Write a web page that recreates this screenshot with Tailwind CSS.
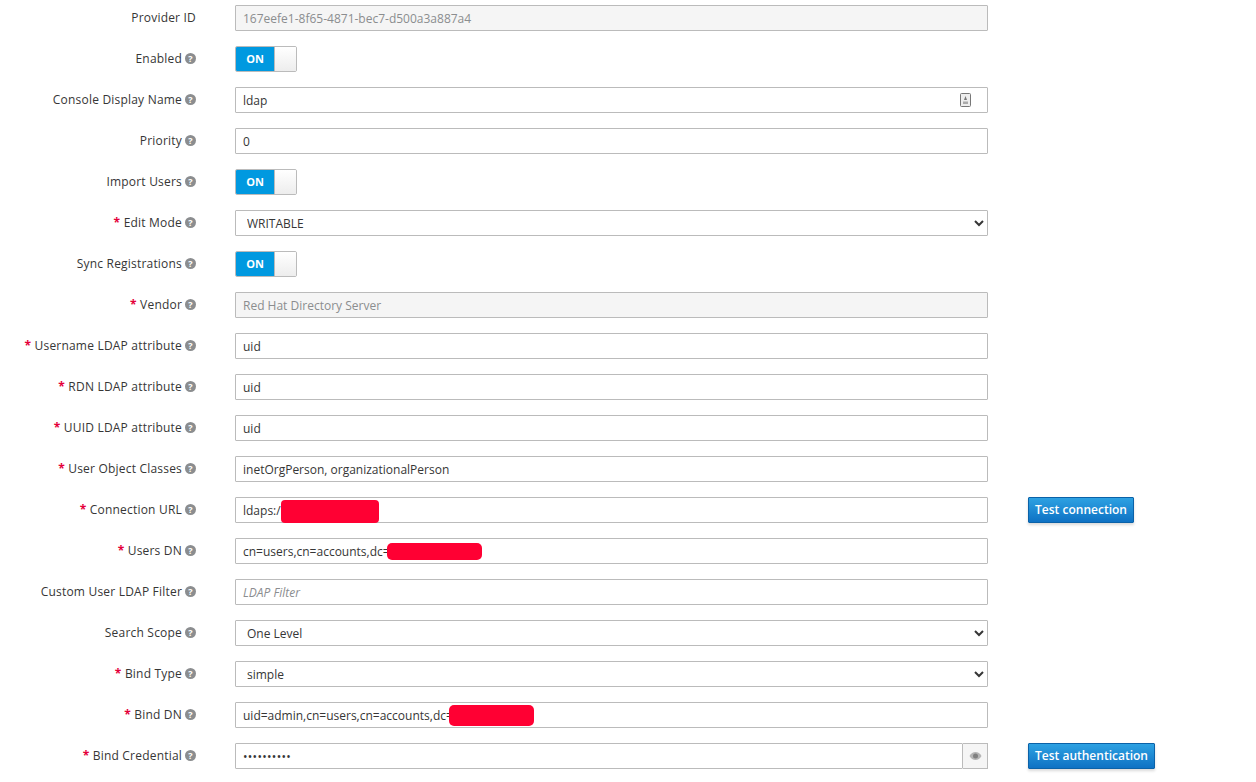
<!DOCTYPE html>
<html lang="en">
<head>
    <meta charset="UTF-8">
    <title>LDAP Provider</title>
    <script src="https://cdn.jsdelivr.net/npm/@tailwindcss/browser@4"></script>
</head>
<body class="bg-white overflow-hidden h-[782px] font-['Open_Sans',sans-serif] text-[12px] text-[#363636]">
<form class="pt-[5px] pl-[235px]">

    <!-- Provider ID -->
    <div class="relative flex items-center h-[26px] mb-[15px]">
        <label class="absolute right-full mr-[39px] whitespace-nowrap font-medium tracking-[0.2px]">Provider ID</label>
        <input disabled value="167eefe1-8f65-4871-bec7-d500a3a887a4" class="w-[753px] h-[26px] px-[7px] border border-[#bbb] bg-[#f5f5f5] text-[#8b8d8f] rounded-[1px]">
    </div>

    <!-- Enabled -->
    <div class="relative flex items-center h-[26px] mb-[15px]">
        <label class="absolute right-full mr-[39px] flex items-center gap-[3px] whitespace-nowrap font-medium tracking-[0.2px]">Enabled <span class="-mt-px w-[11px] h-[11px] rounded-full bg-[#8b8d8f] text-white text-[9px] font-bold leading-[11px] text-center tracking-normal">?</span></label>
        <div class="flex w-[62px] h-[26px] border border-[#bbb] rounded-[2px] overflow-hidden">
            <span class="w-[38px] bg-[#0099e0] text-white text-[11px] font-bold text-center leading-[24px]">ON</span>
            <span class="flex-1 border-l border-[#bbb] bg-gradient-to-b from-white to-[#ededed]"></span>
        </div>
    </div>

    <!-- Console Display Name -->
    <div class="relative flex items-center h-[26px] mb-[15px]">
        <label class="absolute right-full mr-[39px] flex items-center gap-[3px] whitespace-nowrap font-medium tracking-[0.2px]">Console Display Name <span class="-mt-px w-[11px] h-[11px] rounded-full bg-[#8b8d8f] text-white text-[9px] font-bold leading-[11px] text-center tracking-normal">?</span></label>
        <input value="ldap" class="w-[753px] h-[26px] px-[7px] border border-[#bbb] bg-white rounded-[1px]">
        <svg class="absolute left-[725px] top-[6px]" width="11" height="14" viewBox="0 0 11 14"><rect x="0.5" y="0.5" width="10" height="13" rx="1" fill="#eee" stroke="#777"/><path d="M5.500 3 L7 7 H4z" fill="#777"/><rect x="3" y="8.500" width="5" height="2.500" fill="#aaa"/></svg>
    </div>

    <!-- Priority -->
    <div class="relative flex items-center h-[26px] mb-[15px]">
        <label class="absolute right-full mr-[39px] flex items-center gap-[3px] whitespace-nowrap font-medium tracking-[0.2px]">Priority <span class="-mt-px w-[11px] h-[11px] rounded-full bg-[#8b8d8f] text-white text-[9px] font-bold leading-[11px] text-center tracking-normal">?</span></label>
        <input value="0" class="w-[753px] h-[26px] px-[7px] border border-[#bbb] bg-white rounded-[1px]">
    </div>

    <!-- Import Users -->
    <div class="relative flex items-center h-[26px] mb-[15px]">
        <label class="absolute right-full mr-[39px] flex items-center gap-[3px] whitespace-nowrap font-medium tracking-[0.2px]">Import Users <span class="-mt-px w-[11px] h-[11px] rounded-full bg-[#8b8d8f] text-white text-[9px] font-bold leading-[11px] text-center tracking-normal">?</span></label>
        <div class="flex w-[62px] h-[26px] border border-[#bbb] rounded-[2px] overflow-hidden">
            <span class="w-[38px] bg-[#0099e0] text-white text-[11px] font-bold text-center leading-[24px]">ON</span>
            <span class="flex-1 border-l border-[#bbb] bg-gradient-to-b from-white to-[#ededed]"></span>
        </div>
    </div>

    <!-- Edit Mode -->
    <div class="relative flex items-center h-[26px] mb-[15px]">
        <label class="absolute right-full mr-[39px] flex items-center gap-[3px] whitespace-nowrap font-medium tracking-[0.2px]"><span><span class="text-[#e4003a] font-bold">*</span> Edit Mode</span> <span class="-mt-px w-[11px] h-[11px] rounded-full bg-[#8b8d8f] text-white text-[9px] font-bold leading-[11px] text-center tracking-normal">?</span></label>
        <select class="w-[753px] h-[26px] px-[7px] border border-[#bbb] bg-white rounded-[1px] appearance-auto"><option>WRITABLE</option></select>
    </div>

    <!-- Sync Registrations -->
    <div class="relative flex items-center h-[26px] mb-[15px]">
        <label class="absolute right-full mr-[39px] flex items-center gap-[3px] whitespace-nowrap font-medium tracking-[0.2px]">Sync Registrations <span class="-mt-px w-[11px] h-[11px] rounded-full bg-[#8b8d8f] text-white text-[9px] font-bold leading-[11px] text-center tracking-normal">?</span></label>
        <div class="flex w-[62px] h-[26px] border border-[#bbb] rounded-[2px] overflow-hidden">
            <span class="w-[38px] bg-[#0099e0] text-white text-[11px] font-bold text-center leading-[24px]">ON</span>
            <span class="flex-1 border-l border-[#bbb] bg-gradient-to-b from-white to-[#ededed]"></span>
        </div>
    </div>

    <!-- Vendor -->
    <div class="relative flex items-center h-[26px] mb-[15px]">
        <label class="absolute right-full mr-[39px] flex items-center gap-[3px] whitespace-nowrap font-medium tracking-[0.2px]"><span><span class="text-[#e4003a] font-bold">*</span> Vendor</span> <span class="-mt-px w-[11px] h-[11px] rounded-full bg-[#8b8d8f] text-white text-[9px] font-bold leading-[11px] text-center tracking-normal">?</span></label>
        <input disabled value="Red Hat Directory Server" class="w-[753px] h-[26px] px-[7px] border border-[#bbb] bg-[#f5f5f5] text-[#8b8d8f] rounded-[1px]">
    </div>

    <!-- Username LDAP attribute -->
    <div class="relative flex items-center h-[26px] mb-[15px]">
        <label class="absolute right-full mr-[39px] flex items-center gap-[3px] whitespace-nowrap font-medium tracking-[0.2px]"><span><span class="text-[#e4003a] font-bold">*</span> Username LDAP attribute</span> <span class="-mt-px w-[11px] h-[11px] rounded-full bg-[#8b8d8f] text-white text-[9px] font-bold leading-[11px] text-center tracking-normal">?</span></label>
        <input value="uid" class="w-[753px] h-[26px] px-[7px] border border-[#bbb] bg-white rounded-[1px]">
    </div>

    <!-- RDN LDAP attribute -->
    <div class="relative flex items-center h-[26px] mb-[15px]">
        <label class="absolute right-full mr-[39px] flex items-center gap-[3px] whitespace-nowrap font-medium tracking-[0.2px]"><span><span class="text-[#e4003a] font-bold">*</span> RDN LDAP attribute</span> <span class="-mt-px w-[11px] h-[11px] rounded-full bg-[#8b8d8f] text-white text-[9px] font-bold leading-[11px] text-center tracking-normal">?</span></label>
        <input value="uid" class="w-[753px] h-[26px] px-[7px] border border-[#bbb] bg-white rounded-[1px]">
    </div>

    <!-- UUID LDAP attribute -->
    <div class="relative flex items-center h-[26px] mb-[15px]">
        <label class="absolute right-full mr-[39px] flex items-center gap-[3px] whitespace-nowrap font-medium tracking-[0.2px]"><span><span class="text-[#e4003a] font-bold">*</span> UUID LDAP attribute</span> <span class="-mt-px w-[11px] h-[11px] rounded-full bg-[#8b8d8f] text-white text-[9px] font-bold leading-[11px] text-center tracking-normal">?</span></label>
        <input value="uid" class="w-[753px] h-[26px] px-[7px] border border-[#bbb] bg-white rounded-[1px]">
    </div>

    <!-- User Object Classes -->
    <div class="relative flex items-center h-[26px] mb-[15px]">
        <label class="absolute right-full mr-[39px] flex items-center gap-[3px] whitespace-nowrap font-medium tracking-[0.2px]"><span><span class="text-[#e4003a] font-bold">*</span> User Object Classes</span> <span class="-mt-px w-[11px] h-[11px] rounded-full bg-[#8b8d8f] text-white text-[9px] font-bold leading-[11px] text-center tracking-normal">?</span></label>
        <input value="inetOrgPerson, organizationalPerson" class="w-[753px] h-[26px] px-[7px] border border-[#bbb] bg-white rounded-[1px]">
    </div>

    <!-- Connection URL -->
    <div class="relative flex items-center h-[26px] mb-[15px]">
        <label class="absolute right-full mr-[39px] flex items-center gap-[3px] whitespace-nowrap font-medium tracking-[0.2px]"><span><span class="text-[#e4003a] font-bold">*</span> Connection URL</span> <span class="-mt-px w-[11px] h-[11px] rounded-full bg-[#8b8d8f] text-white text-[9px] font-bold leading-[11px] text-center tracking-normal">?</span></label>
        <input value="ldaps:/" class="w-[753px] h-[26px] px-[7px] border border-[#bbb] bg-white rounded-[1px]">
        <span class="absolute left-[46px] top-[3px] w-[98px] h-[23px] rounded-[4px] bg-[#ff0033]"></span>
        <button type="button" class="ml-[40px] h-[26px] w-[106px] border border-[#0b62a8] rounded-[1px] bg-gradient-to-b from-[#2da1e2] to-[#0e72c4] text-white font-semibold shadow-[0_2px_3px_rgba(3,3,3,0.15)] whitespace-nowrap">Test connection</button>
    </div>

    <!-- Users DN -->
    <div class="relative flex items-center h-[26px] mb-[15px]">
        <label class="absolute right-full mr-[39px] flex items-center gap-[3px] whitespace-nowrap font-medium tracking-[0.2px]"><span><span class="text-[#e4003a] font-bold">*</span> Users DN</span> <span class="-mt-px w-[11px] h-[11px] rounded-full bg-[#8b8d8f] text-white text-[9px] font-bold leading-[11px] text-center tracking-normal">?</span></label>
        <input value="cn=users,cn=accounts,dc=" class="w-[753px] h-[26px] px-[7px] border border-[#bbb] bg-white rounded-[1px]">
        <span class="absolute left-[152px] top-[5px] w-[95px] h-[17px] rounded-[5px] bg-[#ff0033]"></span>
    </div>

    <!-- Custom User LDAP Filter -->
    <div class="relative flex items-center h-[26px] mb-[15px]">
        <label class="absolute right-full mr-[39px] flex items-center gap-[3px] whitespace-nowrap font-medium tracking-[0.2px]">Custom User LDAP Filter <span class="-mt-px w-[11px] h-[11px] rounded-full bg-[#8b8d8f] text-white text-[9px] font-bold leading-[11px] text-center tracking-normal">?</span></label>
        <input placeholder="LDAP Filter" class="w-[753px] h-[26px] px-[7px] border border-[#bbb] bg-white rounded-[1px] placeholder:italic placeholder:text-[#8b8d8f]">
    </div>

    <!-- Search Scope -->
    <div class="relative flex items-center h-[26px] mb-[15px]">
        <label class="absolute right-full mr-[39px] flex items-center gap-[3px] whitespace-nowrap font-medium tracking-[0.2px]">Search Scope <span class="-mt-px w-[11px] h-[11px] rounded-full bg-[#8b8d8f] text-white text-[9px] font-bold leading-[11px] text-center tracking-normal">?</span></label>
        <select class="w-[753px] h-[26px] px-[7px] border border-[#bbb] bg-white rounded-[1px] appearance-auto"><option>One Level</option></select>
    </div>

    <!-- Bind Type -->
    <div class="relative flex items-center h-[26px] mb-[15px]">
        <label class="absolute right-full mr-[39px] flex items-center gap-[3px] whitespace-nowrap font-medium tracking-[0.2px]"><span><span class="text-[#e4003a] font-bold">*</span> Bind Type</span> <span class="-mt-px w-[11px] h-[11px] rounded-full bg-[#8b8d8f] text-white text-[9px] font-bold leading-[11px] text-center tracking-normal">?</span></label>
        <select class="w-[753px] h-[26px] px-[7px] border border-[#bbb] bg-white rounded-[1px] appearance-auto"><option>simple</option></select>
    </div>

    <!-- Bind DN -->
    <div class="relative flex items-center h-[26px] mb-[15px]">
        <label class="absolute right-full mr-[39px] flex items-center gap-[3px] whitespace-nowrap font-medium tracking-[0.2px]"><span><span class="text-[#e4003a] font-bold">*</span> Bind DN</span> <span class="-mt-px w-[11px] h-[11px] rounded-full bg-[#8b8d8f] text-white text-[9px] font-bold leading-[11px] text-center tracking-normal">?</span></label>
        <input value="uid=admin,cn=users,cn=accounts,dc=" class="w-[753px] h-[26px] px-[7px] border border-[#bbb] bg-white rounded-[1px]">
        <span class="absolute left-[214px] top-[3px] w-[85px] h-[21px] rounded-[5px] bg-[#ff0033]"></span>
    </div>

    <!-- Bind Credential -->
    <div class="relative flex items-center h-[26px] mb-[15px]">
        <label class="absolute right-full mr-[39px] flex items-center gap-[3px] whitespace-nowrap font-medium tracking-[0.2px]"><span><span class="text-[#e4003a] font-bold">*</span> Bind Credential</span> <span class="-mt-px w-[11px] h-[11px] rounded-full bg-[#8b8d8f] text-white text-[9px] font-bold leading-[11px] text-center tracking-normal">?</span></label>
        <input type="password" value="**********" class="w-[728px] h-[26px] px-[7px] border border-[#bbb] bg-white rounded-[1px] tracking-[0.3px]">
        <span class="flex items-center justify-center w-[25px] h-[26px] border border-l-0 border-[#bbb] bg-[#f5f5f5]">
            <svg width="13" height="10" viewBox="0 0 13 10"><path d="M0.5 5C2 2.500 4 1 6.500 1s4.500 1.500 6 4c-1.500 2.500-3.500 4-6 4s-4.500-1.500-6-4z" fill="#b5b5b5"/><circle cx="6.500" cy="5" r="2.500" fill="#808080"/></svg>
        </span>
        <button type="button" class="ml-[40px] h-[26px] w-[127px] border border-[#0b62a8] rounded-[1px] bg-gradient-to-b from-[#2da1e2] to-[#0e72c4] text-white font-semibold shadow-[0_2px_3px_rgba(3,3,3,0.15)] whitespace-nowrap">Test authentication</button>
    </div>

</form>
</body>
</html>
